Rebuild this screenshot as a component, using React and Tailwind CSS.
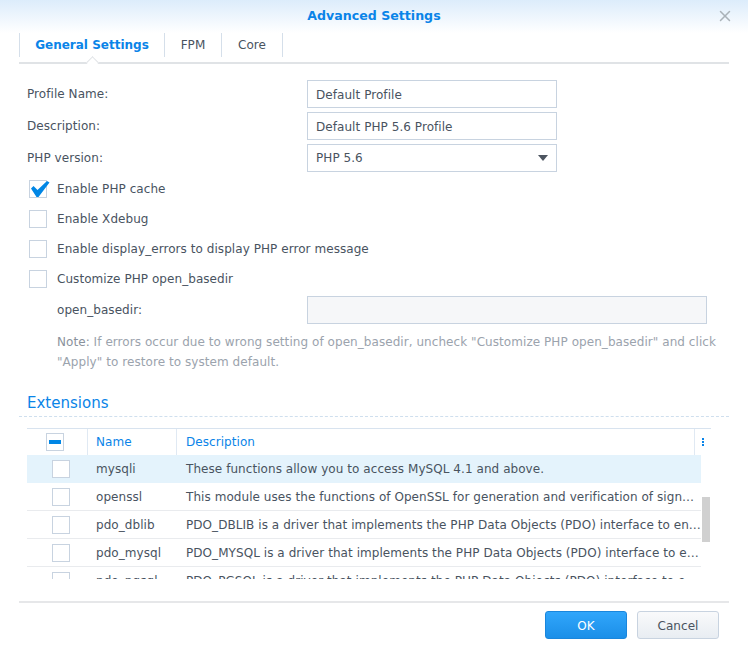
import { X } from "lucide-react";

const EXTENSIONS = [
  { name: "mysqli", desc: "These functions allow you to access MySQL 4.1 and above.", active: true },
  { name: "openssl", desc: "This module uses the functions of OpenSSL for generation and verification of signatures and for encrypting data." },
  { name: "pdo_dblib", desc: "PDO_DBLIB is a driver that implements the PHP Data Objects (PDO) interface to enable access to databases." },
  { name: "pdo_mysql", desc: "PDO_MYSQL is a driver that implements the PHP Data Objects (PDO) interface to enable access to databases." },
  { name: "pdo_pgsql", desc: "PDO_PGSQL is a driver that implements the PHP Data Objects (PDO) interface to enable access to databases." },
];

function Checkbox({ checked }) {
  return (
    <span className="relative block w-[18px] h-[18px] shrink-0 border border-[#c8d3e0] bg-white">
      {checked && (
        <svg className="absolute left-[0px] top-[-2px]" width="20" height="20" viewBox="0 0 20 20">
          <path d="M1 9.5 L3.5 7 L7.5 11 L17 2 L19.5 3.5 L8.5 18 L6.5 18 Z" fill="#0086e5" />
        </svg>
      )}
    </span>
  );
}

function CheckRow({ label, checked }) {
  return (
    <div className="h-[18px] flex items-center gap-[10px] pl-[2px] mb-3">
      <Checkbox checked={checked} />
      <span>{label}</span>
    </div>
  );
}

function FieldRow({ label, children }) {
  return (
    <div className="flex items-center h-7 mb-1">
      <span className="w-[280px] shrink-0">{label}</span>
      {children}
    </div>
  );
}

export default function App() {
  return (
    <div className="relative w-[748px] h-[647px] overflow-hidden bg-white text-[12px] tracking-[0.06px] text-[#49535f] font-['DejaVu_Sans',sans-serif]">
      <div className="h-[33px] bg-gradient-to-b from-[#dcecfb] to-white flex items-center justify-center relative">
        <span className="text-[12.6px] font-bold tracking-normal text-[#0a84e8]">Advanced Settings</span>
        <X className="absolute right-[14px] top-[7px] text-[#aab2b8]" size={18} strokeWidth={2} />
      </div>

      <div className="mx-[19px] h-[31px] border-b-2 border-[#e0e3e6] flex relative">
        <div className="h-6 border-l border-[#d5dfea] w-[145px] flex items-center justify-center font-bold text-[#0a84e8] tracking-normal">
          General Settings
        </div>
        <div className="h-6 border-l border-[#d5dfea] w-[57px] flex items-center justify-center">FPM</div>
        <div className="h-6 border-x border-[#d5dfea] w-[62px] flex items-center justify-center">Core</div>
        <span className="absolute left-[69px] bottom-[-5px] w-[9px] h-[9px] bg-white border-l border-t border-[#e0e3e6] rotate-45" />
      </div>

      <div className="pl-[27px] pt-[16px]">
        <FieldRow label="Profile Name:">
          <div className="w-[250px] h-7 border border-[#c8d3e0] px-2 pt-[1px] flex items-center">Default Profile</div>
        </FieldRow>
        <FieldRow label="Description:">
          <div className="w-[250px] h-7 border border-[#c8d3e0] px-2 pt-[1px] flex items-center">Default PHP 5.6 Profile</div>
        </FieldRow>
        <FieldRow label="PHP version:">
          <div className="w-[250px] h-7 border border-[#c8d3e0] px-2 flex items-center justify-between">
            <span>PHP 5.6</span>
            <span className="w-0 h-0 border-x-[5px] border-x-transparent border-t-[6px] border-t-[#4d5560]" />
          </div>
        </FieldRow>

        <div className="pt-1">
          <CheckRow label="Enable PHP cache" checked />
          <CheckRow label="Enable Xdebug" />
          <CheckRow label="Enable display_errors to display PHP error message" />
          <CheckRow label="Customize PHP open_basedir" />
        </div>

        <div className="flex items-center h-7 -mt-[4px]">
          <span className="w-[280px] pl-[30px] shrink-0">open_basedir:</span>
          <div className="w-[400px] h-7 border border-[#c8d3e0] bg-[#f6f7f9]" />
        </div>

        <p className="pl-[30px] w-[700px] mt-[8px] leading-[20px] text-[#9ba3ad]">
          <span className="text-[#8a929c]">Note:</span> If errors occur due to wrong setting of open_basedir, uncheck "Customize PHP open_basedir" and click "Apply" to restore to system default.
        </p>
      </div>

      <div className="mx-[19px] mt-[19px] pl-2 h-[26px] border-b border-dashed border-[#cfdfee] text-[15px] tracking-normal text-[#0a84e8] flex items-center">
        Extensions
      </div>

      <div className="relative mt-[11px] ml-[27px] w-[684px] h-[151px] overflow-hidden">
        <div className="flex h-[27px] border-t border-[#d8e3ef] text-[#0a84e8]">
          <div className="w-[61px] border-r border-[#e0e9f3] flex items-center justify-center pr-[5px]">
            <span className="w-[18px] h-[18px] border border-[#c8d3e0] flex items-center justify-center">
              <span className="w-3 h-[4px] bg-[#0086e5]" />
            </span>
          </div>
          <div className="w-[89px] border-r border-[#e0e9f3] flex items-center pl-2">Name</div>
          <div className="flex-1 flex items-center pl-[9px]">Description</div>
          <div className="w-[17px] border-l border-[#e0e9f3] flex flex-col items-center justify-center gap-[1px] pr-[1px]">
            <span className="w-[2px] h-[2px] bg-[#0a84e8]" />
            <span className="w-[2px] h-[2px] bg-[#0a84e8]" />
            <span className="w-[2px] h-[2px] bg-[#0a84e8]" />
          </div>
        </div>
        <div className="w-[674px]">
          {EXTENSIONS.map((ext) => (
            <div
              key={ext.name}
              className={`flex items-center h-7 pt-[1px] border-b ${ext.active ? "bg-[#e4f3fc] border-[#e4f3fc]" : "border-[#e9ebee]"}`}
            >
              <div className="w-[61px] flex justify-center pl-[7px] -mt-[1px] shrink-0"><Checkbox /></div>
              <div className="w-[89px] pl-2 shrink-0">{ext.name}</div>
              <div className="flex-1 min-w-0 pl-[9px] truncate">{ext.desc}</div>
            </div>
          ))}
        </div>
        <span className="absolute left-[675px] top-[69px] w-2 h-[45px] bg-[#d0d0d0]" />
      </div>

      <div className="mx-[19px] mt-[22px] border-t-2 border-[#e6e7e9] pt-2 flex justify-end gap-[10px] pr-[10px]">
        <button className="w-[82px] h-7 pt-[1px] rounded-[3px] border border-[#1a86dc] bg-gradient-to-b from-[#30a6fb] to-[#1b8fe8] text-white">OK</button>
        <button className="w-[82px] h-7 pt-[1px] rounded-[3px] border border-[#c8d3e0] bg-gradient-to-b from-[#f9fafb] to-[#e8edf2]">Cancel</button>
      </div>
    </div>
  );
}
